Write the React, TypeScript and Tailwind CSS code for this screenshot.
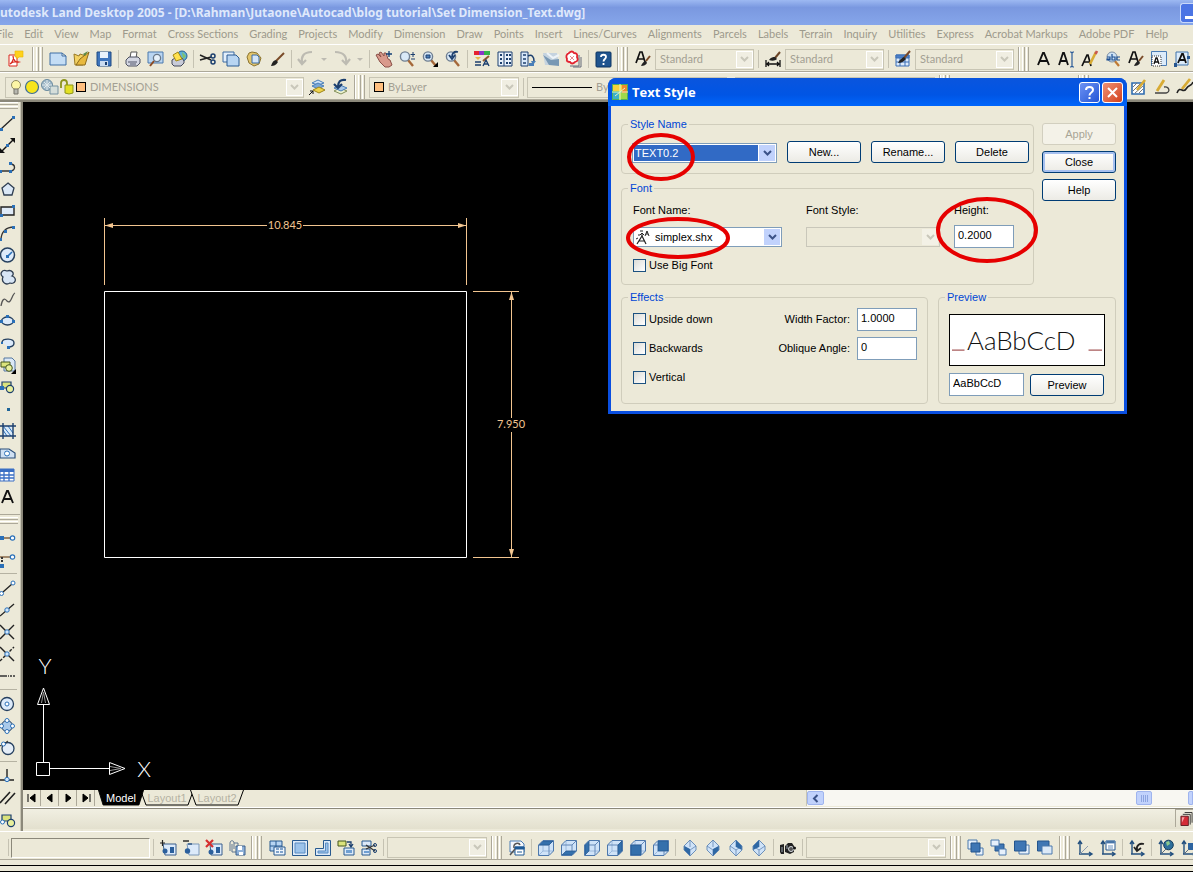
import type { ReactNode } from "react";
import clsx from "clsx";

const NAVY = "#1c3f6e";
const BLUE = "#4a7fb8";
const SKY = "#cfe3f8";

function Svg({ children }: { children: ReactNode }) {
  return (
    <svg width="18" height="18" viewBox="-1 -1 18 18" fill="none" className="block shrink-0">
      {children}
    </svg>
  );
}

const cubeFaces = {
  top: "1,5 5,1 15,1 11,5",
  bottom: "1,15 5,11 15,11 11,15",
  left: "1,5 5,1 5,11 1,15",
  right: "11,5 15,1 15,11 11,15",
  front: "1,5 11,5 11,15 1,15",
  back: "5,1 15,1 15,11 5,11",
};

function Cube({ face }: { face: keyof typeof cubeFaces }) {
  return (
    <>
      <path d="M0.500 5L5 0.500H15.500V11L11 15.500H0.500Z" fill={SKY} />
      <path d="M5 1V11H15M5 11L1 15" stroke="#8fb0d6" strokeWidth=".8" />
      <path d="M1 5H11V15M11 5L15 1" stroke="#6488b6" />
      <polygon points={cubeFaces[face]} fill="#3470ac" stroke="#24548c" strokeWidth=".6" />
      <path d="M0.500 5L5 0.500H15.500V11L11 15.500H0.500Z" stroke="#4d78ac" />
    </>
  );
}

const isoFaces = {
  sw: "2,6 8,9 8,16 2,10",
  se: "14,6 8,9 8,16 14,10",
  ne: "8,0 14,6 14,10 8,7",
  nw: "8,0 2,6 2,10 8,7",
};

function Iso({ face }: { face: keyof typeof isoFaces }) {
  return (
    <>
      <path d="M8 0L14 6V10L8 16L2 10V6Z" fill={SKY} />
      <path d="M2 6L8 10L14 6M8 10V16M8 0V7" stroke="#6d90ba" strokeWidth=".9" />
      <polygon points={isoFaces[face]} fill="#2f68a4" />
      <path d="M8 0L14 6V10L8 16L2 10V6Z" stroke="#5f86b4" strokeWidth=".9" />
    </>
  );
}

function Lens({ children }: { children?: ReactNode }) {
  return (
    <>
      <path d="M9 9L14 15" stroke="#a5683a" strokeWidth="2.4" />
      <circle cx="6" cy="5.5" r="4.6" fill="#d9e9f7" stroke="#6f7f92" strokeWidth="1.4" />
      {children}
    </>
  );
}

function Axes() {
  return <path d="M3 14V2M1 4L3 1L5 4M2 14H15M12 12L15 14L12 16" stroke="#23507f" strokeWidth="1.4" />;
}

const bigA = "M2 14L7 2H8L13 14M4 10H11";

const icons: Record<string, ReactNode> = {
  pdf: (
    <>
      <path d="M1 4H9V15H1Z" fill="#fff" stroke="#d9261c" />
      <path d="M2 13C5 11 6 7 5 5C5 9 8 12 11 11C7 10 4 11 2 13Z" stroke="#d9261c" strokeWidth="1.2" />
      <path d="M7 0H15V6H11L9 8V6H7Z" fill="#ffd21c" stroke="#e9b700" strokeWidth=".6" />
    </>
  ),
  new: <path d="M0 2H12L16 5V14H0ZM12 2V5H16" fill="#c4ddf5" stroke="#3f6ea5" />,
  open: (
    <>
      <path d="M1 3L6 5L7 3L13 5L10 14L2 14Z" fill="#f3d264" stroke="#9a7a25" />
      <path d="M7 8L16 1L12 14H3Z" fill="#e8b93f" stroke="#8b6a1c" />
      <path d="M10 3L15 0L12 5" fill="#5c8a45" />
    </>
  ),
  save: (
    <>
      <path d="M1 1H15V15H2L1 14Z" fill="#3e75bd" stroke="#1f4a82" />
      <path d="M4 1H12V7H4Z" fill="#e8f2fc" />
      <path d="M4 10H12V15H4Z" fill="#cbdcf0" />
      <path d="M9 11H11V14H9Z" fill={NAVY} />
    </>
  ),
  print: (
    <>
      <path d="M5 7L6 1H12L11 7" fill="#fff" stroke="#555" />
      <path d="M1 9L4 6H13L15 8V12L12 15H3L1 13Z" fill="#d3d6e2" stroke="#4d5160" />
      <path d="M3 11H12M5 13H11" stroke="#505468" />
    </>
  ),
  preview: (
    <>
      <path d="M0 1H15V12H0Z" fill="#b9d5f1" stroke="#4a78ad" />
      <circle cx="9" cy="7" r="3.6" fill="#e6f1fa" stroke="#68788a" strokeWidth="1.3" />
      <path d="M6 10L2 15" stroke="#8c4a22" strokeWidth="2" />
    </>
  ),
  publish: (
    <>
      <circle cx="11" cy="5" r="5" fill="#5fb0d8" stroke="#27618f" />
      <path d="M11 1L15 5L12 8" fill="#7fc36a" />
      <path d="M1 9L4 7H11L13 10V12L10 15H3L1 13Z" fill="#c8cbd8" stroke="#44485a" />
      <path d="M2 4L7 1L11 8L5 10Z" fill="#ffe14d" stroke="#a48814" />
    </>
  ),
  cut: (
    <>
      <path d="M0 4L11 9M0 9L11 6" stroke="#222" strokeWidth="1.5" />
      <circle cx="13" cy="5" r="2" stroke={NAVY} strokeWidth="1.5" />
      <circle cx="13" cy="11" r="2" stroke={NAVY} strokeWidth="1.5" />
    </>
  ),
  copy: (
    <>
      <path d="M0 1H11V11H0Z" fill="#e3effb" stroke="#3b6ba2" />
      <path d="M4 4H13L16 7V15H4Z" fill="#b8d5f2" stroke="#2b5a92" />
    </>
  ),
  paste: (
    <>
      <path d="M6 1L11 2L15 7L13 13L8 15L3 12L1 6L3 2Z" fill="#e3c56c" stroke="#8b7430" />
      <path d="M6 4H11L13 6V12H6Z" fill="#d4e6f8" stroke="#3b6ba2" />
    </>
  ),
  brush: (
    <>
      <path d="M15 2L7 10" stroke="#7a4a28" strokeWidth="2" />
      <path d="M2 15C3 11 5 9 7 9L9 11C7 14 5 15 2 15Z" fill="#222" />
    </>
  ),
  undo: <path d="M14 1C5 1 3 6 4 12M0 8L4 13L8 9" stroke="#bdbbb2" strokeWidth="2.2" />,
  redo: <path d="M1 1C10 1 13 6 12 12M8 9L12 13L16 8" stroke="#bdbbb2" strokeWidth="2.2" />,
  pan: (
    <>
      <path d="M0 4L2 3L5 6L3 2L5 1L8 5L8 2L10 2L12 8L14 9L16 14L13 16H9L4 11Z" fill="#d99a8c" stroke="#8a4f47" />
      <path d="M13 0V6M10 3H16" stroke="#123f75" strokeWidth="1.3" />
    </>
  ),
  zoomRealtime: (
    <Lens>
      <path d="M14 1V6M11.5 3.5H16M12 8H16" stroke={NAVY} />
    </Lens>
  ),
  zoomWindow: (
    <Lens>
      <path d="M4 4H8V7H4Z" fill={BLUE} stroke={NAVY} />
      <path d="M16 11V16H11Z" fill="#000" />
    </Lens>
  ),
  zoomPrevious: (
    <Lens>
      <path d="M13 1C9 0 7 2 7 6M4 4L7 8L10 4" stroke={NAVY} strokeWidth="1.8" />
    </Lens>
  ),
  properties: (
    <>
      <path d="M0 0H5V4H0Z" fill="#e5212f" />
      <path d="M5 0H10V4H5Z" fill="#8b35c9" />
      <path d="M10 0H16V4H10Z" fill="#32b44a" />
      <path d="M1 6H7L4 9Z" fill="#e6b84a" />
      <path d="M15 5L9 10" stroke="#915a31" strokeWidth="2" />
      <path d="M1 11H7M1 14H7M9 15L12 9L15 15M10 13H14" stroke={NAVY} strokeWidth="1.4" />
    </>
  ),
  designCenter: (
    <>
      <path d="M1 1H15V15H1Z" fill="#e9f2fc" stroke={NAVY} />
      <path d="M7 1V15" stroke={NAVY} />
      <path d="M3 4H5M3 8H5M3 12H5M9 4H11M12 4H14M9 8H11M12 8H14M9 12H11M12 12H14" stroke={NAVY} strokeWidth="2" />
    </>
  ),
  toolPalettes: (
    <>
      <path d="M1 1H8V15H1Z" fill="#d9e9fa" stroke={NAVY} />
      <path d="M3 4H6M3 8H6M3 12H6" stroke={NAVY} strokeWidth="1.5" />
      <path d="M8 5C12 3 14 6 14 10" stroke={NAVY} strokeWidth="1.5" />
      <path d="M11 10H16L13 14ZM9 12H14V15H9Z" fill={BLUE} />
    </>
  ),
  sheetSet: (
    <>
      <path d="M0 2H14L16 14H2Z" fill="#c5d3df" />
      <path d="M0 4L8 9L16 8V15L6 14Z" fill="#7898b4" />
      <path d="M4 2L10 7L16 4" stroke="#eef4f8" strokeWidth="2" />
    </>
  ),
  markup: (
    <>
      <path d="M13 4V15H4M15 6V16H7" stroke="#656b78" />
      <path d="M1 1H11V12H1Z" fill="#fff" />
      <path
        d="M3 2Q6 -1 8 2Q12 2 11 6Q13 10 9 11Q6 14 4 11Q0 11 1 8Q-1 4 3 2Z"
        fill="#fff"
        stroke="#e2232f"
        strokeWidth="1.8"
      />
      <path d="M4 5L8 9M8 5L4 9" stroke="#e98a90" />
    </>
  ),
  help: (
    <>
      <rect x="1" y="1" width="15" height="15" rx="1" fill="#1f548f" stroke="#0d3462" />
      <path d="M6 6C6 3 11 3 11 6C11 8 8.500 8 8.500 10.500M8.500 12V14" stroke="#fff" strokeWidth="1.8" />
    </>
  ),
  textStyle: (
    <>
      <path d="M1 12L5 1H7L10 11M3 8H9" stroke="#111" strokeWidth="1.7" />
      <path d="M15 5L11 10" stroke="#7a4a28" strokeWidth="2" />
      <path d="M6 15C7 12 9 10 11 10L12 12C11 14 9 15 6 15Z" fill="#222" />
    </>
  ),
  dimStyle: (
    <>
      <path d="M15 1L10 7" stroke="#6b4527" strokeWidth="2" />
      <path d="M4 9C6 6 8 6 10 6L12 8C10 10 7 10 4 9Z" fill="#222" />
      <path d="M1 9V16M15 9V16M2 13H14M4 11L2 13L4 15M12 11L14 13L12 15" stroke="#111" strokeWidth="1.3" />
    </>
  ),
  tableStyle: (
    <>
      <path d="M1 4H14V15H1Z" fill="#dceafa" stroke="#3a6fb5" />
      <path d="M1 4H14V7H1ZM1 11H14M5 7V15M10 7V15" fill="#4b7fc6" stroke="#3a6fb5" />
      <path d="M15 0L9 7" stroke="#7a4a28" strokeWidth="2" />
      <path d="M3 12C5 8 7 7 9 6L11 8C8 11 6 12 3 12Z" fill="#222" />
    </>
  ),
  mtext: <path d={bigA} stroke="#111" strokeWidth="1.9" />,
  dtext: (
    <>
      <path d="M0 14L4 2H5L9 14M2 10H8" stroke="#111" strokeWidth="1.8" />
      <path d="M11 1H12L13 2L14 1H15M13 2V15M11 16H12L13 15L14 16H15" stroke="#2a5b98" strokeWidth="1.2" />
    </>
  ),
  editText: (
    <>
      <path d="M0 15L5 4H6L9 15M2 11H8" stroke="#111" strokeWidth="1.7" />
      <path d="M14 1L8 13" stroke="#d8ab35" strokeWidth="2.6" />
      <path d="M15 0L13.500 3" stroke="#c9574f" strokeWidth="2.6" />
    </>
  ),
  findText: (
    <>
      <path d="M9 9L14 15" stroke="#c07a35" strokeWidth="2.2" />
      <circle cx="7" cy="6" r="5" fill="#cfe3f5" stroke="#7c8ea3" />
      <path d="M2 6H5V9H2V8H5M7 3V9H10V6H7M15 6H12V9H15" stroke="#1c4f92" strokeWidth="1.2" />
    </>
  ),
  scaleText: (
    <>
      <path d="M0.500 0.500H15.500V14.500H0.500Z" fill="#dcebf9" stroke="#4b7db5" />
      <path d="M1 5H10V15H1Z" fill="#fff" stroke="#333" strokeDasharray="1 1" />
      <path d="M3 13L5 7H6L8 13M4 11H7" stroke="#111" strokeWidth="1.3" />
    </>
  ),
  justifyText: (
    <>
      <path d="M2 1H14V14H2Z" fill="#dcebf9" stroke="#3f72ac" />
      <path d="M4 12L8 3H9L12 12M5 9H11" stroke="#111" strokeWidth="1.8" />
      <path d="M0 12H3V16H0ZM13 5H16V8H13Z" fill="#26558f" />
    </>
  ),
  hatchEdit: (
    <>
      <path d="M1 4H13V15H1Z" fill="#fff" stroke="#2f6cb0" strokeWidth="1.6" />
      <path d="M2 8L6 4M2 12L9 5M4 14L12 7M8 14L12 10" stroke="#777" />
      <path d="M14 1L6 11" stroke="#d8ab35" strokeWidth="2.6" />
    </>
  ),
  polyEdit: (
    <>
      <path d="M10 1L3 12" stroke="#d8ab35" strokeWidth="2.8" />
      <path d="M1 14H12C17 13 15 7 10 8" stroke="#444" strokeWidth="1.3" />
    </>
  ),
  splineEdit: (
    <>
      <path d="M13 0L5 10" stroke="#d8ab35" strokeWidth="2.8" />
      <path d="M0 14C3 6 6 15 9 10S14 8 16 3" stroke="#222" strokeWidth="1.6" />
    </>
  ),
  makeLayer: (
    <>
      <path d="M3 4L9 1L15 4L9 6Z" fill="#cfe3f8" stroke={BLUE} />
      <path d="M3 7L9 4L15 7L9 10Z" fill="#7aa7d6" stroke={BLUE} />
      <path d="M4 11L10 8L16 11L10 14Z" fill="#eed34c" stroke="#9d8417" />
      <path d="M0 16L4 12M1 12H4V15" stroke="#111" />
    </>
  ),
  layerPrevious: (
    <>
      <path d="M2 12L8 9L15 12L9 15Z" fill="#eef3d0" stroke="#83905a" />
      <path d="M2 9L8 6L15 9L9 12Z" fill="#a9c8e8" stroke={BLUE} />
      <path d="M14 1C8 0 6 3 6 8M2 5L6 9L10 5" stroke={NAVY} strokeWidth="2.2" />
    </>
  ),
  line: (
    <>
      <path d="M1 14L14 2" stroke="#222" strokeWidth="1.3" />
      <path d="M0 13H3V16H0ZM12 1H15V4H12Z" fill="#2a70b8" />
    </>
  ),
  xline: (
    <>
      <path d="M1 15L14 2" stroke="#111" strokeWidth="1.5" />
      <path d="M0 16V11L5 16ZM15 1V6L10 1Z" fill="#111" />
      <path d="M6 7H9V10H6Z" fill="#2a70b8" />
    </>
  ),
  pline: (
    <>
      <path d="M0 12H10C16 12 16 5 10 5" stroke="#333" strokeWidth="1.4" />
      <path d="M0 11H2V14H0ZM9 11H12V14H9ZM9 3H12V6H9Z" fill="#2a70b8" />
    </>
  ),
  polygon: <path d="M8 2L14 7L12 14H4L2 7Z" fill="#dbe8f6" stroke="#2f3e52" strokeWidth="1.3" />,
  rect: (
    <>
      <path d="M1 4H14V12H1Z" fill="#dfeaf7" stroke="#222" strokeWidth="1.4" />
      <path d="M0 11H3V14H0ZM12 2H15V5H12Z" fill="#2a70b8" />
    </>
  ),
  arc: (
    <>
      <path d="M1 15C1 7 6 2 14 2" stroke="#333" strokeWidth="1.3" />
      <path d="M0 13H2V16H0ZM4 5H7V8H4ZM12 1H15V4H12Z" fill="#2a70b8" />
    </>
  ),
  circle: (
    <>
      <circle cx="7.500" cy="8" r="7" fill="#dceafa" stroke="#26405f" strokeWidth="1.5" />
      <path d="M7 10L12 5" stroke="#2a70b8" strokeWidth="1.6" />
      <path d="M6 8H9V11H6Z" fill="#2a70b8" />
    </>
  ),
  revcloud: (
    <path
      d="M3 8C-1 5 2 0 7 2C12 0 15 5 12 7C18 9 15 16 10 14C5 17 1 12 3 8Z"
      fill="#d7e5f5"
      stroke="#2f3e52"
      strokeWidth="1.3"
    />
  ),
  spline: <path d="M1 15C2 9 4 6 7 10C11 14 12 3 15 2" stroke="#555" strokeWidth="1.3" />,
  ellipse: (
    <>
      <ellipse cx="7.500" cy="8" rx="6" ry="4" fill="#dceafa" stroke="#26405f" strokeWidth="1.3" />
      <path d="M0 7H3V10H0ZM12 7H15V10H12ZM6 2H9V5H6Z" fill="#2a70b8" />
    </>
  ),
  ellipseArc: (
    <>
      <path d="M2 7C3 3 14 3 14 8C14 11 11 12 8 12" stroke="#26405f" strokeWidth="1.4" fill="#dceafa" />
      <path d="M7 11H10V14H7ZM1 7H3V9H1Z" fill="#2a70b8" />
    </>
  ),
  insertBlock: (
    <>
      <path d="M4 1H12L15 4V14H4Z" fill="#dbe8f6" stroke="#5577a0" />
      <path d="M1 5H10V10H1Z" fill="#dbe37c" stroke="#42551d" />
      <circle cx="9" cy="11" r="3.300" fill="#e8ef9c" stroke="#42551d" />
      <path d="M16 12V17H11Z" fill="#000" />
    </>
  ),
  makeBlock: (
    <>
      <path d="M2 3H11V9H2Z" fill="#dbe37c" stroke={NAVY} strokeWidth="1.2" />
      <circle cx="10" cy="10" r="3.600" fill="#e8ef9c" stroke={NAVY} strokeWidth="1.2" />
      <path d="M0 7H4V11H0Z" fill="#2a70b8" />
    </>
  ),
  point: <path d="M7 7H10V10H7Z" fill="#1f6598" />,
  hatch: (
    <>
      <path d="M3 3H13V13H3Z" fill="#dbeaf8" />
      <path d="M3 7L7 13M3 3L11 13M8 3L13 10" stroke="#2a70b8" />
      <path d="M0 3H16M0 13H16M3 0V16M13 0V16" stroke={NAVY} strokeWidth="1.4" />
    </>
  ),
  region: (
    <>
      <path d="M0 4H9L15 8V13H0Z" fill="#cfe0f3" stroke="#2b4f7b" strokeWidth="1.2" />
      <circle cx="7" cy="8.500" r="2.500" fill="#fff" stroke="#2a70b8" />
    </>
  ),
  table: (
    <>
      <path d="M0 2H14V14H0Z" fill="#fff" stroke="#3a6fc4" />
      <path d="M0 2H14V5H0Z" fill="#3a6fc4" />
      <path d="M0 8H14M0 11H14M4 5V14M9 5V14" stroke="#3a6fc4" strokeWidth="1.3" />
    </>
  ),
  tempTrack: (
    <>
      <path d="M0 8H10" stroke="#8a6a4a" strokeWidth="1.6" />
      <path d="M0 6H4V10H0Z" fill="#2a70b8" />
      <circle cx="12.500" cy="8" r="2.200" fill="#fff" stroke="#2a70b8" strokeWidth="1.2" />
    </>
  ),
  snapFrom: (
    <>
      <path d="M0 5H10" stroke="#8a6a4a" strokeWidth="1.5" />
      <path d="M2 5V11" stroke="#333" strokeWidth="2" strokeDasharray="2 1" />
      <path d="M0 12H4V16H0Z" fill="#2a70b8" />
      <circle cx="12.500" cy="5" r="2.200" fill="#fff" stroke="#2a70b8" strokeWidth="1.2" />
    </>
  ),
  endpoint: (
    <>
      <path d="M3 12L12 4" stroke="#222" strokeWidth="1.3" />
      <circle cx="1.500" cy="13.500" r="2" fill="#fff" stroke="#2a70b8" />
      <circle cx="13" cy="3" r="2" fill="#fff" stroke="#2a70b8" />
    </>
  ),
  midpoint: (
    <>
      <path d="M0 14L14 2" stroke="#222" strokeWidth="1.3" />
      <circle cx="7" cy="8" r="2.200" fill="#cfe5fa" stroke="#2a70b8" />
    </>
  ),
  intersection: (
    <>
      <path d="M0 1L14 15M0 15L14 1" stroke="#222" strokeWidth="1.4" />
      <circle cx="7" cy="8" r="2.200" fill="#cfe5fa" stroke="#2a70b8" />
    </>
  ),
  apparent: (
    <>
      <path d="M0 1L14 15" stroke="#222" strokeWidth="1.4" />
      <path d="M0 15L14 1" stroke="#222" strokeWidth="1.4" strokeDasharray="3 1.500" />
      <circle cx="7" cy="8" r="2.200" fill="#cfe5fa" stroke="#2a70b8" />
    </>
  ),
  extension: <path d="M0 8H7M8 8H9M10 8H12M13 8H15" stroke="#333" strokeWidth="1.6" />,
  center: (
    <>
      <circle cx="7" cy="8" r="6.500" fill="#dceafa" stroke="#26405f" strokeWidth="1.3" />
      <circle cx="7" cy="8" r="2" fill="#fff" stroke="#2a70b8" />
    </>
  ),
  quadrant: (
    <>
      <circle cx="7" cy="8" r="5.500" fill="#a9c9ea" stroke="#26405f" />
      <circle cx="7" cy="2.500" r="2" fill="#fff" stroke="#2a70b8" />
      <circle cx="7" cy="13.500" r="2" fill="#fff" stroke="#2a70b8" />
      <circle cx="1.500" cy="8" r="2" fill="#fff" stroke="#2a70b8" />
      <circle cx="12.500" cy="8" r="2" fill="#fff" stroke="#2a70b8" />
    </>
  ),
  tangent: (
    <>
      <circle cx="8" cy="8.500" r="6" fill="#e4edf7" stroke="#26405f" strokeWidth="1.3" />
      <path d="M0 6L8 1" stroke="#222" />
      <circle cx="3.500" cy="4" r="2" fill="#fff" stroke="#2a70b8" />
    </>
  ),
  perpendicular: (
    <>
      <path d="M7 1V11M0 12H14" stroke="#222" strokeWidth="1.4" />
      <circle cx="7" cy="11.500" r="2.200" fill="#cfe5fa" stroke="#2a70b8" />
    </>
  ),
  parallel: <path d="M0 13L10 2M5 14L15 3" stroke="#222" strokeWidth="1.6" />,
  snapInsert: (
    <>
      <path d="M2 3H11V9H2Z" fill="#dbe37c" stroke={NAVY} strokeWidth="1.2" />
      <circle cx="11" cy="11" r="3.600" fill="#e8ef9c" stroke={NAVY} strokeWidth="1.2" />
      <circle cx="2.500" cy="10" r="2" fill="#fff" stroke="#2a70b8" />
    </>
  ),
  refAdd: (
    <>
      <path d="M3 4H16V15H5Z" fill="#dceafa" stroke="#3a5f8c" />
      <path d="M10 7H14V13H10Z" fill="#2b5f9c" />
      <path d="M0 3H5M2.500 0V6" stroke="#222" strokeWidth="1.2" />
      <circle cx="5" cy="11" r="2.500" fill="#2b5f9c" />
    </>
  ),
  refRemove: (
    <>
      <path d="M4 4H16V15H6Z" fill="#dceafa" stroke="#7b97b8" />
      <path d="M0 1H6" stroke="#222" strokeWidth="1.4" />
      <path d="M5 4H9" stroke="#3a5f8c" strokeWidth="1.6" />
      <circle cx="4.500" cy="11" r="2.700" fill="#2b5f9c" />
    </>
  ),
  refDiscard: (
    <>
      <path d="M4 4H16V15H5Z" fill="#dceafa" stroke="#3a5f8c" />
      <path d="M10 7H14V13H10Z" fill="#2b5f9c" />
      <circle cx="5" cy="12" r="2.500" fill="#2b5f9c" />
      <path d="M0 0L7 7M7 0L0 7" stroke="#d63030" strokeWidth="2.200" />
    </>
  ),
  refSave: (
    <>
      <path d="M1 11V3C1 0 5 0 5 3V9M3 4V12H7M5 3H9V8" stroke="#5d7490" />
      <path d="M7 6H16V15H7Z" fill="#8fb1d8" stroke="#3a5f8c" />
      <path d="M9 6H13V10H9ZM10 12H14V15H10Z" fill="#fff" />
    </>
  ),
  viewports: (
    <>
      <path d="M1 1H13V11H1Z" fill="#b7d4f2" stroke="#27598f" />
      <path d="M1 6H13M7 1V11" stroke="#27598f" />
      <path d="M5 7H16V15H5Z" fill="#eef5fc" stroke="#27598f" />
      <path d="M7 9H10M11 9H14M7 12H10M11 12H14" stroke="#5c88ba" strokeWidth="1.500" />
    </>
  ),
  singleViewport: (
    <>
      <path d="M0.500 0.500H15.500V15.500H0.500Z" fill="#dbe9f8" stroke="#27598f" />
      <path d="M3 3H13V13H3Z" fill="#9cc3ea" stroke="#5a8cc2" />
    </>
  ),
  polyViewport: (
    <>
      <path d="M8.500 0.500H15.500V15.500H0.500V8.500H8.500Z" fill="#dbe9f8" stroke="#27598f" />
      <path d="M10.500 3H13V13H3V11H10.500Z" fill="#9cc3ea" stroke="#5a8cc2" />
    </>
  ),
  objViewport: (
    <>
      <path d="M0 1H8V6H0Z" fill="#dbe37c" stroke="#42551d" />
      <path d="M9 2H13V6M11 4L13 7L15 4" stroke={NAVY} strokeWidth="1.300" />
      <path d="M6 8H16V15H6Z" fill="#dbe9f8" stroke="#27598f" />
      <path d="M8 10H14V13H8Z" fill="#6f9fd2" />
    </>
  ),
  clipViewport: (
    <>
      <path d="M1 1H10V6H1ZM1 9H9V15H1Z" fill="#dbe9f8" stroke="#27598f" />
      <path d="M3 11H8V13H3Z" fill="#6f9fd2" />
      <path d="M5 9L14 5M5 5L14 11" stroke="#333" strokeWidth="1.200" />
      <circle cx="14" cy="5" r="1.500" stroke={NAVY} />
      <circle cx="14" cy="11" r="1.500" stroke={NAVY} />
    </>
  ),
  namedViews: (
    <>
      <path d="M1 1H12L15 4V12H1Z" fill="#f4f8fd" stroke="#4a7db5" />
      <path d="M6 7H15V15H6Z" fill="#fff" stroke="#1f5a96" />
      <path d="M6 7H15V9H6ZM8 12H13" fill="#1f5a96" stroke="#1f5a96" />
      <path d="M5 8C4 3 10 2 11 5M1 15L6 9" stroke="#555" strokeWidth="1.500" />
    </>
  ),
  vTop: <Cube face="top" />,
  vBottom: <Cube face="bottom" />,
  vLeft: <Cube face="left" />,
  vRight: <Cube face="right" />,
  vFront: <Cube face="front" />,
  vBack: <Cube face="back" />,
  isoSw: <Iso face="sw" />,
  isoSe: <Iso face="se" />,
  isoNe: <Iso face="ne" />,
  isoNw: <Iso face="nw" />,
  camera: (
    <>
      <path d="M0 5L4 4V14H1L0 12ZM5 6L8 3L12 3L14 6V12L10 14L5 12Z" fill="#222" />
      <circle cx="11" cy="9" r="2.500" fill="#555" stroke="#d8dde2" />
      <path d="M2 7V12M7 5V9" stroke="#9aa5b0" />
      <circle cx="14.500" cy="8" r="1.500" fill="#111" />
    </>
  ),
  orderFront: (
    <>
      <path d="M0 0H9V9H0ZM8 8H15V15H8Z" fill="#e6f0fb" stroke="#4a78ad" />
      <path d="M3 3H12V12H3Z" fill="#3f76b4" stroke="#24548c" />
    </>
  ),
  orderBack: (
    <>
      <path d="M4 4H13V11H4Z" fill="#3f76b4" stroke="#24548c" />
      <path d="M0 0H8V6H0ZM8 9H15V15H8Z" fill="#e6f0fb" stroke="#4a78ad" />
    </>
  ),
  orderAbove: (
    <>
      <path d="M5 5H15V14H5Z" fill="#e6f0fb" stroke="#4a78ad" />
      <path d="M0.500 1H12V11H0.500Z" fill="#3f76b4" stroke="#24548c" />
    </>
  ),
  orderUnder: (
    <>
      <path d="M0.500 1H12V11H0.500Z" fill="#3f76b4" stroke="#24548c" />
      <path d="M5 6H15V14H5Z" fill="#dce9f7" stroke="#4a78ad" />
    </>
  ),
  ucs: (
    <>
      <Axes />
      <path d="M3 14L11 6" stroke="#8c9cae" />
    </>
  ),
  ucsDialog: (
    <>
      <Axes />
      <path d="M6 1H15V10H6Z" fill="#fff" stroke="#27598f" />
      <path d="M6 1H15V3H6ZM8 6H13M8 8H13" fill="#27598f" stroke="#6d93bf" />
    </>
  ),
  ucsPrevious: (
    <>
      <Axes />
      <path d="M8 10C7 5 11 3 15 4M5 7L8 11L12 8" stroke="#222" strokeWidth="1.800" />
    </>
  ),
  ucsWorld: (
    <>
      <Axes />
      <circle cx="10.500" cy="5" r="4.800" fill="#2e6f9b" stroke="#183d5c" />
      <path d="M8 2L11 1L12 4L9 6Z" fill="#8cc98b" />
      <path d="M3 14L8 9" stroke="#5a6b7c" />
    </>
  ),
  ucsObject: (
    <>
      <Axes />
      <path d="M7 3H16V10H7Z" fill="#2d64a0" />
      <path d="M3 14L8 9" stroke="#5a6b7c" />
    </>
  ),
};

function Tool({ name, className }: { name: string; className: string }) {
  return (
    <button type="button" aria-label={name} className={clsx("flex shrink-0 items-center justify-center", className)}>
      <Svg>{icons[name]}</Svg>
    </button>
  );
}

function Sep() {
  return (
    <div className="flex w-[6px] shrink-0 justify-center self-stretch py-[3px]">
      <div className="w-px bg-[#c5c2b2]" />
    </div>
  );
}

// end of one toolbar followed by the drag handle of the next one
function Grip() {
  return (
    <div className="flex w-[17px] shrink-0 self-stretch pl-[3px]">
      <div className="w-px bg-[#aca899]" />
      <div className="w-px bg-white" />
      <div className="ml-[2px] w-[3px] border-r border-l border-r-[#aca899] border-l-white" />
      <div className="ml-px w-[3px] border-r border-l border-r-[#aca899] border-l-white" />
    </div>
  );
}

function Tools({ items }: { items: string[] }) {
  return (
    <>
      {items.map((item, i) => {
        if (item === "|") return <Sep key={i} />;
        if (item === "#") return <Grip key={i} />;
        if (item === "v")
          return (
            <button key={i} type="button" aria-label="more" className="flex w-[13px] shrink-0 justify-center">
              <span className="border-x-3 border-t-3 border-x-transparent border-t-[#bdbbb2]" />
            </button>
          );
        return <Tool key={i} name={item} className="h-[22px] w-[23px]" />;
      })}
    </>
  );
}

function Chevron({ color }: { color: string }) {
  return (
    <svg width="9" height="7" viewBox="0 0 9 7" fill="none">
      <path d="M1 1L4.500 4.500L8 1" stroke={color} strokeWidth="2" />
    </svg>
  );
}

function ToolCombo({ label, value, className, lead }: { label: string; value: string; className: string; lead?: ReactNode }) {
  return (
    <div className={clsx("mx-px flex h-[21px] shrink-0 items-center border border-[#c8c5b4] pl-1", className)}>
      {lead}
      <select
        disabled
        aria-label={label}
        className="min-w-0 flex-1 appearance-none text-[11px] text-[#a3a093] opacity-100"
      >
        <option>{value}</option>
      </select>
      <span className="flex h-[17px] w-[17px] items-center justify-center border border-white bg-[#f0eee2]">
        <Chevron color="#c9c7ba" />
      </span>
    </div>
  );
}

const menus = [
  "File", "Edit", "View", "Map", "Format", "Cross Sections", "Grading", "Projects", "Modify", "Dimension", "Draw",
  "Points", "Insert", "Lines/Curves", "Alignments", "Parcels", "Labels", "Terrain", "Inquiry", "Utilities", "Express",
  "Acrobat Markups", "Adobe PDF", "Help",
];

const drawTools = [
  "line", "xline", "pline", "polygon", "rect", "arc", "circle", "revcloud", "spline", "ellipse", "ellipseArc",
  "insertBlock", "makeBlock", "point", "hatch", "region", "table", "mtext",
];

const snapTools = [
  "tempTrack", "snapFrom", "|", "endpoint", "midpoint", "intersection", "apparent", "extension", "|", "center",
  "quadrant", "tangent", "|", "perpendicular", "parallel", "snapInsert",
];

function Swatch() {
  return <span className="h-[10px] w-[10px] shrink-0 border border-black bg-[#ffbf7f]" />;
}

function LayerState() {
  return (
    <span className="mr-1 flex shrink-0 items-center gap-[2px]">
      <svg width="64" height="16" viewBox="0 0 64 16" fill="none">
        <circle cx="6" cy="6" r="4.500" fill="#fdf6a6" stroke="#8e8a60" />
        <path d="M4 10H8V15H4Z" fill="#b8b8b0" stroke="#77756a" />
        <circle cx="22" cy="8" r="6.500" fill="#f7e51c" stroke="#3c6e96" strokeWidth="1.200" />
        <circle cx="37" cy="6" r="5.500" fill="#9fb8c8" stroke="#6a8a9e" />
        <path d="M40 7H48V15H40Z" fill="#d5deda" stroke="#7591a0" />
        <path d="M34 3L40 9M40 3L34 9M37 1V11M32 6H42" stroke="#dfe8ea" />
        <path d="M51 9V4C51 0 57 0 57 4V7" stroke="#8d941c" strokeWidth="1.800" />
        <path d="M55 6H63V14L59 15L55 14Z" fill="#e3e024" stroke="#8d941c" />
      </svg>
      <Swatch />
    </span>
  );
}

function SideGrip() {
  return (
    <div className="flex h-[10px] w-[18px] shrink-0 flex-col gap-px">
      <div className="h-[3px] border-t border-b border-t-white border-b-[#aca899]" />
      <div className="h-[3px] border-t border-b border-t-white border-b-[#aca899]" />
    </div>
  );
}

function SideBar() {
  return (
    <aside className="flex w-[23px] shrink-0 flex-col border-r-2 border-[#8b887a] bg-[#ece9d8]">
      <div className="flex flex-1 flex-col border-r border-[#c8c5b4]">
        <SideGrip />
        {drawTools.map((t) => (
          <Tool key={t} name={t} className="h-[22px] w-[15px]" />
        ))}
        <div className="mt-[6px] mb-[2px] h-px w-full bg-[#aca899]" />
        <SideGrip />
        {snapTools.map((t, i) =>
          t === "|" ? (
            <div key={i} className="h-[6px] w-[17px] py-[2px]">
              <div className="h-px bg-[#b5b2a2]" />
            </div>
          ) : (
            <Tool key={i} name={t} className="h-[22px] w-[15px]" />
          ),
        )}
      </div>
    </aside>
  );
}

function Drawing() {
  return (
    <div className="relative min-h-[688px] flex-1 overflow-hidden bg-black">
      <svg
        width="540"
        height="480"
        viewBox="0 0 540 480"
        className="absolute top-0 left-0 font-['Lato',sans-serif] text-[11px]"
        fill="none"
      >
        <path d="M81.500 189.500H443.500V455.500H81.500Z" stroke="#fff" />
        <path
          d="M81.500 116V183M443.500 116V183M82 123.500H244M280 123.500H443M450 189.500H496M450 455.500H496M488.500 190V316M488.500 330V455"
          stroke="#f2c590"
        />
        <path
          d="M82 123.500L90 121V126ZM443 123.500L435 121V126ZM488.500 190L486 198H491ZM488.500 455L486 447H491Z"
          fill="#f2c590"
        />
        <text x="262" y="127" textAnchor="middle" fill="#f2c590">10.845</text>
        <text x="488" y="326" textAnchor="middle" fill="#f2c590">7.950</text>
      </svg>
      <svg
        width="140"
        height="140"
        viewBox="0 0 140 140"
        className="absolute bottom-0 left-0 font-['Lato',sans-serif] text-[22px] font-light"
        fill="none"
      >
        <path d="M13.500 112.500H26.500V125.500H13.500ZM20.500 112V54M27 118.500H86" stroke="#fff" />
        <path d="M14.500 54.500L20.500 38L26.500 54.500ZM86.500 112.500L102 118.500L86.500 124.500Z" stroke="#fff" />
        <path d="M18.500 53L20.500 42L22.500 53M87 116.500L98 118.500L87 120.500" stroke="#999" />
        <text x="22" y="24" textAnchor="middle" fill="#fff">Y</text>
        <text x="121" y="127" textAnchor="middle" fill="#fff">X</text>
      </svg>
    </div>
  );
}

function LayoutTab({ label, active }: { label: string; active?: boolean }) {
  return (
    <button
      type="button"
      className={clsx(
        "relative -mr-1 h-4 text-[11px] leading-4",
        active ? "z-10 w-[46px] text-white" : "w-[54px] text-[#b5b2a3]",
      )}
    >
      <svg
        width="100%"
        height="16"
        viewBox="0 0 54 16"
        preserveAspectRatio="none"
        className="absolute inset-0"
      >
        <path d="M0.500 0L6 15H48L53.500 0" fill={active ? "#000" : "#ece9d8"} stroke="#000" />
      </svg>
      <span className="relative">{label}</span>
    </button>
  );
}

const navPaths = ["M5 4V12M12 4L7 8L12 12Z", "M11 4L6 8L11 12Z", "M7 4L12 8L7 12Z", "M6 4L11 8L6 12ZM13 4V12"];

function LayoutBar() {
  return (
    <div className="flex h-4 shrink-0 bg-[#ece9d8]">
      {navPaths.map((d) => (
        <button key={d} type="button" aria-label="scroll tabs" className="h-4 w-[18px] border-r border-[#aca899]">
          <svg width="17" height="16" viewBox="0 0 17 16">
            <path d={d} fill="#000" stroke="#000" />
          </svg>
        </button>
      ))}
      <div className="ml-[3px] flex font-['Liberation_Sans',sans-serif]">
        <LayoutTab label="Model" active />
        <LayoutTab label="Layout1" />
        <LayoutTab label="Layout2" />
      </div>
      <div className="ml-auto flex w-[390px] items-center bg-[#f8f7f2]">
        <div className="h-4 w-1 border-r border-[#c8c5b4] bg-[#ece9d8]" />
        <ScrollButton />
        <div className="ml-auto flex h-[14px] w-4 items-center justify-center gap-px rounded-xs border border-[#9fb4ee] bg-[#c1d2fc]">
          <i className="h-[7px] w-px bg-[#8ca4e0]" />
          <i className="h-[7px] w-px bg-[#8ca4e0]" />
          <i className="h-[7px] w-px bg-[#8ca4e0]" />
          <i className="h-[7px] w-px bg-[#8ca4e0]" />
        </div>
        <div className="ml-9 h-[14px] w-[5px] rounded-l-xs border border-[#9fb4ee] bg-[#c1d2fc]" />
      </div>
    </div>
  );
}

function ScrollButton() {
  return (
    <button
      type="button"
      aria-label="scroll left"
      className="flex h-[14px] w-[17px] items-center justify-center rounded-xs border border-[#9fb4ee] bg-[#c1d2fc]"
    >
      <svg width="7" height="9" viewBox="0 0 7 9" fill="none">
        <path d="M5.500 1L2 4.500L5.500 8" stroke="#3b5287" strokeWidth="2" />
      </svg>
    </button>
  );
}

function CommandLine() {
  return (
    <div className="flex h-[25px] shrink-0 flex-col bg-[#ece9d8] pt-px">
      <div className="h-px bg-white" />
      <div className="flex h-[21px] justify-end border-t border-[#8b887a] bg-linear-to-b from-[#f1efe2] to-[#e3e0ce]">
        <div className="flex h-[18px] w-[18px] items-center border-t border-l border-[#aca899] pl-1">
          <svg width="14" height="16" viewBox="0 0 14 16" fill="none">
            <path d="M5 1H13V12M3 3H11V14" stroke="#333" />
            <path d="M1 5H9V15H1Z" fill="#d52b36" stroke="#5f1b20" />
            <path d="M2 6H5L2 12Z" fill="#f2a0a4" />
          </svg>
        </div>
      </div>
    </div>
  );
}

function PushButton({ children, focused, disabled }: { children: string; focused?: boolean; disabled?: boolean }) {
  return (
    <button
      type="button"
      disabled={disabled}
      className={clsx(
        "h-[22px] w-[74px] shrink-0 rounded-[3px] border text-center leading-4",
        disabled
          ? "border-[#d2cfbf] bg-[#f4f2e8] text-[#a8a596]"
          : "border-[#003c74] bg-linear-to-b from-white to-[#ecebe5] text-black",
        focused && "shadow-[inset_0_0_0_2px_#a6c0ef]",
      )}
    >
      {children}
    </button>
  );
}

function Combo({ id, value, selected, disabled, lead, className }: {
  id: string; value: string; selected?: boolean; disabled?: boolean; lead?: ReactNode; className: string;
}) {
  return (
    <div
      className={clsx(
        "flex shrink-0 items-center border p-px",
        disabled ? "border-[#c9c7ba] bg-[#ece9d8]" : "border-[#7f9db9] bg-white",
        className,
      )}
    >
      {lead}
      <select
        id={id}
        disabled={disabled}
        aria-label={id}
        className={clsx(
          "h-4 min-w-0 flex-1 appearance-none px-px leading-4 opacity-100",
          selected ? "bg-[#316ac5] text-white" : "text-black",
        )}
      >
        <option>{value}</option>
      </select>
      <span
        className={clsx(
          "pointer-events-none ml-px flex h-4 w-[16px] items-center justify-center",
          disabled ? "bg-[#f3f1e6]" : "bg-[#c1d2fc]",
        )}
      >
        <Chevron color={disabled ? "#c9c7ba" : "#3b5287"} />
      </span>
    </div>
  );
}

function Check({ label }: { label: string }) {
  return (
    <label className="flex items-center gap-[3px]">
      <input
        type="checkbox"
        className="h-[13px] w-[13px] appearance-none border border-[#1c5180] bg-linear-to-br from-[#dcdcd7] to-white"
      />
      {label}
    </label>
  );
}

function Field({ id, value, className }: { id: string; value: string; className: string }) {
  return (
    <input
      id={id}
      aria-label={id}
      defaultValue={value}
      className={clsx("h-[23px] border border-[#7f9db9] bg-white px-[3px] pb-[3px]", className)}
    />
  );
}

function Group({ title, className, children }: { title: string; className: string; children: ReactNode }) {
  return (
    <fieldset className={clsx("rounded-[4px] border border-[#d0cdbc]", className)}>
      <legend className="ml-[6px] px-[2px] leading-[13px] text-[#0046d5]">{title}</legend>
      {children}
    </fieldset>
  );
}

function TextStyleDialog() {
  return (
    <div
      role="dialog"
      aria-label="Text Style"
      className="absolute top-[78px] left-[608px] w-[519px] rounded-t-lg bg-[#0a4fe0] px-[3px] pb-[3px] font-['Liberation_Sans',sans-serif] text-[11px] leading-[13px] text-black"
    >
      <div className="-mx-[3px] flex h-7 items-center rounded-t-lg bg-linear-to-b from-[#0a55dd] via-[#0055e5] via-60% to-[#0066fb] px-1 font-['Open_Sans',sans-serif]">
        <svg width="16" height="16" viewBox="0 0 16 16" className="mr-1">
          <path d="M0 0H16V16H0Z" fill="#4fae5a" />
          <path d="M1 1H10V7H1Z" fill="#f4d23d" />
          <path d="M10 1H15V9H10Z" fill="#ef8a2d" />
          <path d="M1 8H7V15H1Z" fill="#3bb1c9" />
          <path d="M7 9H15V15H7Z" fill="#9fd84b" />
          <path d="M0 8H16M8 0V16M3 12L13 4" stroke="#e9f6c3" />
        </svg>
        <span className="flex-1 text-[13px] font-bold text-white">Text Style</span>
        <button
          type="button"
          aria-label="Help"
          className="mr-[2px] flex h-[21px] w-[21px] items-center justify-center rounded-[3px] border border-white bg-linear-to-br from-[#6d92f3] to-[#2455d6]"
        >
          <svg width="13" height="15" viewBox="0 0 13 15" fill="none">
            <path d="M3 5C3 1 10 1 10 5C10 8 6.500 7 6.500 10.500M6.500 12V14" stroke="#fff" strokeWidth="2" />
          </svg>
        </button>
        <button
          type="button"
          aria-label="Close window"
          className="flex h-[21px] w-[21px] items-center justify-center rounded-[3px] border border-white bg-linear-to-br from-[#ee8f72] to-[#d23f17]"
        >
          <svg width="13" height="13" viewBox="0 0 13 13" fill="none">
            <path d="M2 2L11 11M11 2L2 11" stroke="#fff" strokeWidth="2" />
          </svg>
        </button>
      </div>

      <div className="bg-[#ece9d8] pt-3 pr-2 pb-[7px] pl-[10px]">
        <div className="flex gap-2">
          <div className="w-[413px]">
            <Group title="Style Name" className="pb-[10px]">
              <div className="flex items-end gap-[10px] pt-[10px] pl-[10px]">
                <Combo id="style-name" value="TEXT0.2" selected className="h-5 w-[145px]" />
                <PushButton>New...</PushButton>
                <PushButton>Rename...</PushButton>
                <PushButton>Delete</PushButton>
              </div>
            </Group>
            <Group title="Font" className="mt-2 pb-3">
              <div className="flex items-start pt-[9px] pl-[11px]">
                <div className="flex w-[149px] flex-col gap-[10px]">
                  <label htmlFor="font-name">Font Name:</label>
                  <Combo
                    id="font-name"
                    value="simplex.shx"
                    className="h-5 w-[149px]"
                    lead={
                      <svg width="18" height="15" viewBox="0 0 18 15" fill="none" className="mr-px shrink-0">
                        <path d="M2 14L7 6L11 14M4 11H10" stroke="#222" strokeWidth="1.200" />
                        <path d="M7 6V3M3 5H5L7 3L9 5M5 1H8M1 9L3 8" stroke="#222" />
                        <path d="M10 6L12 1L14 6M11 4H13" stroke="#222" />
                      </svg>
                    }
                  />
                </div>
                <div className="ml-6 flex w-[134px] flex-col gap-[10px]">
                  <label htmlFor="font-style">Font Style:</label>
                  <Combo id="font-style" value="" disabled className="h-5 w-[134px]" />
                </div>
                <div className="ml-[14px] flex w-[60px] flex-col gap-2">
                  <label htmlFor="text-height">Height:</label>
                  <Field id="text-height" value="0.2000" className="w-[60px]" />
                </div>
              </div>
              <div className="pt-[11px] pl-[11px]">
                <Check label="Use Big Font" />
              </div>
            </Group>
          </div>
          <div className="flex flex-col gap-[6px] pt-[5px]">
            <PushButton disabled>Apply</PushButton>
            <PushButton focused>Close</PushButton>
            <PushButton>Help</PushButton>
          </div>
        </div>

        <div className="mt-[6px] flex gap-[10px]">
          <Group title="Effects" className="w-[308px]">
            <div className="flex justify-between pt-1 pr-[10px] pb-[14px] pl-[11px]">
              <div className="grid auto-rows-[23px] items-center gap-[6px]">
                <Check label="Upside down" />
                <Check label="Backwards" />
                <Check label="Vertical" />
              </div>
              <div className="grid auto-rows-[23px] grid-cols-[auto_60px] items-center gap-x-[7px] gap-y-[6px] text-right">
                <label htmlFor="width-factor">Width Factor:</label>
                <Field id="width-factor" value="1.0000" className="" />
                <label htmlFor="oblique-angle">Oblique Angle:</label>
                <Field id="oblique-angle" value="0" className="" />
              </div>
            </div>
          </Group>
          <Group title="Preview" className="w-[176px]">
            <div className="px-[10px] pt-[10px]">
              <svg width="156" height="52" viewBox="0 0 156 52" fill="none" className="border border-black bg-white">
                <path d="M0 36.500H13M142 36.500H156" stroke="#8b2a2a" />
                <text x="72" y="36" textAnchor="middle" fill="#111" className="font-['Lato',sans-serif] text-[27px] font-light">
                  AaBbCcD
                </text>
              </svg>
              <div className="mt-[7px] flex items-center gap-[6px]">
                <Field id="preview-text" value="AaBbCcD" className="w-[75px]" />
                <PushButton>Preview</PushButton>
              </div>
            </div>
          </Group>
        </div>
      </div>

      <svg width="519" height="336" viewBox="0 0 519 336" fill="none" className="pointer-events-none absolute top-0 left-0">
        <g stroke="#e60000" strokeWidth="4">
          <ellipse cx="53" cy="79" rx="32" ry="22" />
          <ellipse cx="70" cy="160" rx="50" ry="19" />
          <ellipse cx="379" cy="152" rx="49" ry="31" />
        </g>
      </svg>
    </div>
  );
}

export default function App() {
  return (
    <div className="relative min-h-screen overflow-hidden bg-[#ece9d8] font-['Lato',sans-serif] text-[11px]">
      <header className="flex h-[25px] items-center justify-between bg-linear-to-b from-[#9db9f2] via-[#7a98e0] via-30% to-[#86a6ea]">
        <h1 className="font-['Noto_Sans',sans-serif] text-[12px] font-bold whitespace-pre text-[#dfe8fb]">
          utodesk Land Desktop 2005 - [D:\Rahman\Jutaone\Autocad\blog tutorial\Set Dimension_Text.dwg]
        </h1>
        <button
          type="button"
          aria-label="Minimize"
          className="flex h-5 w-[13px] items-end rounded-l-[3px] border border-r-0 border-[#c9d8fa] bg-[#4b74e4] pb-[3px] pl-1"
        >
          <span className="h-[3px] w-2 bg-white" />
        </button>
      </header>

      <nav className="-ml-1 flex h-[19px] items-center gap-[11px] whitespace-nowrap text-[#9d9a8c]">
        {menus.map((m) => (
          <button key={m} type="button">
            {m}
          </button>
        ))}
      </nav>

      <div className="flex h-7 items-center overflow-hidden border-t border-b border-t-white border-b-[#aca899] pt-[2px] pl-1">
        <Tools items={["pdf"]} />
        <div className="w-[2px] shrink-0" />
        <Tools
          items={[
            "#", "new", "open", "save", "|", "print", "preview", "publish", "|", "cut", "copy", "paste", "brush", "|",
            "undo", "v", "redo", "v", "|", "pan", "zoomRealtime", "zoomWindow", "zoomPrevious", "|", "properties",
            "designCenter", "toolPalettes", "sheetSet", "markup", "|", "help", "#", "textStyle",
          ]}
        />
        <ToolCombo label="Text style" value="Standard" className="w-[99px]" />
        <Tools items={["|", "dimStyle"]} />
        <ToolCombo label="Dimension style" value="Standard" className="w-[99px]" />
        <Tools items={["|", "tableStyle"]} />
        <ToolCombo label="Table style" value="Standard" className="w-[99px]" />
        <Tools items={["#", "mtext", "dtext", "editText", "findText", "textStyle", "scaleText", "justifyText"]} />
      </div>

      <div className="flex h-7 items-center overflow-hidden border-t border-b border-t-white border-b-[#aca899] pt-[2px] pl-1">
        <ToolCombo label="Layer" value="DIMENSIONS" className="w-[299px]" lead={<LayerState />} />
        <Tools items={["makeLayer", "layerPrevious", "#"]} />
        <ToolCombo
          label="Color"
          value="ByLayer"
          className="w-[150px]"
          lead={<span className="mr-1 flex"><Swatch /></span>}
        />
        <Sep />
        <ToolCombo
          label="Linetype"
          value="ByLayer"
          className="w-[200px]"
          lead={<span className="mr-1 h-px w-[60px] bg-black" />}
        />
        <Sep />
        <ToolCombo label="Lineweight" value="ByLayer" className="w-[200px]" />
        <Grip />
        <div className="w-[122px] shrink-0" />
        <Grip />
        <div className="w-[35px] shrink-0" />
        <Tools items={["hatchEdit", "polyEdit", "splineEdit"]} />
      </div>

      <main className="flex border-t-2 border-[#8b887a]">
        <SideBar />
        <div className="flex min-w-0 flex-1 flex-col">
          <Drawing />
          <LayoutBar />
          <CommandLine />
        </div>
      </main>

      <footer>
        <div className="flex h-[29px] items-center overflow-hidden border-t border-b border-t-white border-b-[#aca899] pt-1 pl-[5px]">
          <Sep />
          <div className="h-5 w-[139px] shrink-0 border border-t-[#8b887a] border-r-white border-b-white border-l-[#8b887a]" />
          <Sep />
          <Tools
            items={[
              "refAdd", "refRemove", "refDiscard", "refSave", "#", "viewports", "singleViewport", "polyViewport",
              "objViewport", "clipViewport", "|",
            ]}
          />
          <ToolCombo label="Viewport scale" value="" className="w-[100px]" />
          <Tools
            items={[
              "#", "namedViews", "|", "vTop", "vBottom", "vLeft", "vRight", "vFront", "vBack", "|", "isoSw", "isoSe",
              "isoNe", "isoNw", "|", "camera", "|",
            ]}
          />
          <ToolCombo label="View" value="" className="w-[140px]" />
          <Tools
            items={[
              "#", "orderFront", "orderBack", "orderAbove", "orderUnder", "#", "ucs", "ucsDialog", "|", "ucsPrevious",
              "|", "ucsWorld", "ucsObject",
            ]}
          />
        </div>
        <div className="mt-[5px] h-[7px] border-t border-b border-black" />
      </footer>

      <TextStyleDialog />
    </div>
  );
}
